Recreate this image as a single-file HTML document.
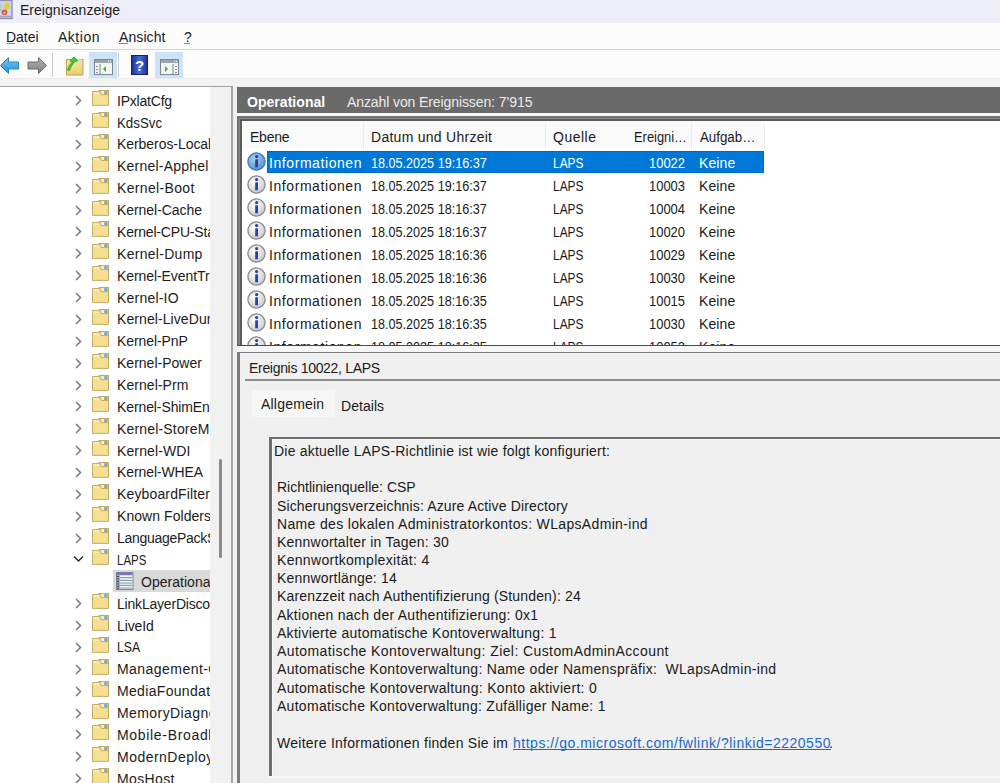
<!DOCTYPE html><html><head><meta charset="utf-8"><style>
*{margin:0;padding:0;box-sizing:border-box}
html,body{width:1000px;height:783px;overflow:hidden;background:#f0f0f0;font-family:"Liberation Sans",sans-serif;color:#1a1a1a}
div,svg{position:absolute}
.t{white-space:pre;font-size:14px;line-height:14px}
</style></head><body>
<div style="left:0px;top:0px;width:1000px;height:23px;background:#efeff9;"></div>
<svg style="left:0;top:0" width="14" height="20" viewBox="0 0 14 20">
<rect x="-2" y="0.5" width="14" height="18" fill="#d8d6ee" stroke="#8b91b0" stroke-width="1.4"/>
<rect x="0" y="2" width="11" height="13" fill="#d4d2ec"/>
<rect x="0" y="3" width="2" height="8" fill="#b8c8e0"/>
<path d="M4 4 Q6.5 0.8 9.5 3.5 Q10.8 6.5 8.5 9.5 L5 9.5 Q3 7 4 4 Z" fill="#cdd445"/>
<circle cx="4.5" cy="12.2" r="2.8" fill="#d65444"/>
<circle cx="4.4" cy="12.8" r="1.3" fill="#f2a8a0"/>
<rect x="0" y="15.6" width="11.5" height="1.8" fill="#a3a8c8"/>
</svg>
<div class="t" style="left:20px;top:3px;font-size:14px;line-height:14px;color:#1c1c1c;letter-spacing:0.027px;">Ereignisanzeige</div>
<div style="left:0px;top:23px;width:1000px;height:26px;background:#fcfcfd;"></div>
<div class="t" style="left:6px;top:30px;font-size:14px;line-height:14px;color:#1a1a1a;letter-spacing:-0.047px;">Datei</div>
<div style="left:7px;top:43px;width:8px;height:1px;background:#8a8a8a;"></div>
<div class="t" style="left:58px;top:30px;font-size:14px;line-height:14px;color:#1a1a1a;letter-spacing:0.516px;">Aktion</div>
<div style="left:74px;top:43px;width:5px;height:1px;background:#8a8a8a;"></div>
<div class="t" style="left:119px;top:30px;font-size:14px;line-height:14px;color:#1a1a1a;letter-spacing:0.096px;">Ansicht</div>
<div style="left:119px;top:43px;width:9px;height:1px;background:#8a8a8a;"></div>
<div class="t" style="left:184px;top:30px;font-size:14px;line-height:14px;color:#1a1a1a;">?</div>
<div style="left:184px;top:43px;width:6px;height:1px;background:#8a8a8a;"></div>
<div style="left:0px;top:49px;width:1000px;height:1px;background:#d5d5d7;"></div>
<div style="left:0px;top:50px;width:1000px;height:29px;background:#fcfcfc;"></div>
<div style="left:0px;top:79px;width:1000px;height:7px;background:#f3f3f3;"></div>
<div style="left:0px;top:78px;width:1000px;height:1px;background:#ececec;"></div>
<svg style="left:0;top:56px" width="20" height="19" viewBox="0 0 20 19">
<defs><linearGradient id="gb" x1="0" y1="0" x2="0" y2="1"><stop offset="0" stop-color="#7cc8f4"/><stop offset="1" stop-color="#1e8fd8"/></linearGradient></defs>
<path d="M0.5 9.5 L8.5 1.5 L8.5 6 L18.5 6 L18.5 13 L8.5 13 L8.5 17.5 Z" fill="url(#gb)" stroke="#2a86c8" stroke-width="1"/>
</svg>
<svg style="left:27px;top:56px" width="21" height="19" viewBox="0 0 21 19">
<defs><linearGradient id="gg" x1="0" y1="0" x2="0" y2="1"><stop offset="0" stop-color="#b8b8b8"/><stop offset="1" stop-color="#7a7a7a"/></linearGradient></defs>
<path d="M19.5 9.5 L11.5 1.5 L11.5 6 L1 6 L1 13 L11.5 13 L11.5 17.5 Z" fill="url(#gg)" stroke="#6c6c6c" stroke-width="1"/>
</svg>
<div style="left:52px;top:53px;width:1px;height:24px;background:#cfcfcf;"></div>
<svg style="left:65px;top:56px" width="20" height="20" viewBox="0 0 20 20">
<defs><linearGradient id="gf" x1="0" y1="0" x2="0" y2="1"><stop offset="0" stop-color="#f8e6a6"/><stop offset="1" stop-color="#edcc6e"/></linearGradient></defs>
<rect x="1.5" y="3.5" width="16.5" height="15.5" fill="url(#gf)" stroke="#c2a24a" stroke-width="1"/>
<rect x="12" y="3" width="4.5" height="2.5" fill="#c8d8f0"/>
<path d="M2.5 14 C3.5 10 5.5 7.5 7.5 6 L5 5 L9 0.8 L12.5 5 L10 5.5 C8 7.5 6 10 4.5 14.5 Z" fill="#3ccf2a" stroke="#1f9a18" stroke-width="0.7"/>
</svg>
<div style="left:89px;top:52px;width:28px;height:26px;background:#cce4f7;"></div>
<svg style="left:94px;top:59px" width="19" height="16" viewBox="0 0 19 16">
<rect x="0.5" y="0.5" width="18" height="15" fill="#f4f4f4" stroke="#7d8590" stroke-width="1"/>
<rect x="1" y="1" width="17" height="3" fill="#9aa2ac"/>
<rect x="14" y="1.5" width="1" height="1.5" fill="#e8e8e8"/><rect x="16" y="1.5" width="1" height="1.5" fill="#e8e8e8"/>
<rect x="5.5" y="5" width="1" height="10" fill="#7d8590"/>
<rect x="2" y="7" width="2" height="1" fill="#8a8a8a"/><rect x="2" y="10" width="2" height="1" fill="#8a8a8a"/><rect x="2" y="13" width="2" height="1" fill="#8a8a8a"/>
<path d="M9 10 L12 7 L12 13 Z" fill="#36b82a"/></svg>
<div style="left:118px;top:53px;width:1px;height:24px;background:#cfcfcf;"></div>
<svg style="left:131px;top:55px" width="17" height="20" viewBox="0 0 17 20">
<defs><linearGradient id="gh" x1="0" y1="0" x2="1" y2="0"><stop offset="0" stop-color="#1d2f9a"/><stop offset="0.5" stop-color="#4a6ad8"/><stop offset="1" stop-color="#1d2f9a"/></linearGradient></defs>
<rect x="0.5" y="0.5" width="16" height="19" fill="url(#gh)" stroke="#15206a" stroke-width="1"/>
<text x="8.5" y="15.5" font-family="Liberation Sans" font-weight="bold" font-size="15" fill="#fff" text-anchor="middle">?</text>
</svg>
<div style="left:155px;top:52px;width:28px;height:26px;background:#cce4f7;"></div>
<svg style="left:160px;top:59px" width="19" height="16" viewBox="0 0 19 16">
<rect x="0.5" y="0.5" width="18" height="15" fill="#f4f4f4" stroke="#7d8590" stroke-width="1"/>
<rect x="1" y="1" width="17" height="3" fill="#9aa2ac"/>
<rect x="14" y="1.5" width="1" height="1.5" fill="#e8e8e8"/><rect x="16" y="1.5" width="1" height="1.5" fill="#e8e8e8"/>
<rect x="12.5" y="5" width="1" height="10" fill="#7d8590"/>
<rect x="15" y="7" width="2" height="1" fill="#8a8a8a"/><rect x="15" y="10" width="2" height="1" fill="#8a8a8a"/><rect x="15" y="13" width="2" height="1" fill="#8a8a8a"/>
<path d="M5 7 L8 10 L5 13 Z" fill="#36b82a"/></svg>
<div style="left:0px;top:86px;width:232px;height:1px;background:#a3a3a3;"></div>
<div style="left:0px;top:87px;width:231px;height:696px;background:#ffffff;"></div>
<div style="left:210px;top:87px;width:21px;height:696px;background:#f1f1f1;"></div>
<div style="left:231px;top:86px;width:2px;height:697px;background:#a6a6a6;"></div>
<div style="left:219px;top:459px;width:3px;height:99px;background:#8a8a8a;border-radius:1.5px"></div>
<div style="left:0;top:87px;width:210px;height:696px;overflow:hidden">
<svg style="left:74px;top:8px" width="9" height="11" viewBox="0 0 9 11"><path d="M2 1 L6.5 5.5 L2 10" fill="none" stroke="#7a7a7a" stroke-width="1.5"/></svg>
<svg style="left:92px;top:3px" width="17" height="16" viewBox="0 0 17 16">
<rect x="7" y="0.5" width="9.5" height="14" fill="#e6cf82" stroke="#bba45a" stroke-width="0.9"/>
<rect x="9.3" y="1.2" width="3" height="2.8" fill="#f4f0e0"/><rect x="12.3" y="1.2" width="3" height="2.8" fill="#6fa9dc"/>
<path d="M0.5 1.5 L7.6 1.5 L9.4 4.6 L16.5 4.6 L16.5 15.4 L0.5 15.4 Z" fill="#f6df92" stroke="#bfa55a" stroke-width="0.9"/>
<rect x="1.3" y="2.3" width="6" height="1.5" fill="#fbeeb8"/>
</svg>
<div class="t" style="left:117px;top:7px;font-size:14px;line-height:14px;color:#1b1b1b;letter-spacing:-0.214px;">IPxlatCfg</div>
<svg style="left:74px;top:30px" width="9" height="11" viewBox="0 0 9 11"><path d="M2 1 L6.5 5.5 L2 10" fill="none" stroke="#7a7a7a" stroke-width="1.5"/></svg>
<svg style="left:92px;top:25px" width="17" height="16" viewBox="0 0 17 16">
<rect x="7" y="0.5" width="9.5" height="14" fill="#e6cf82" stroke="#bba45a" stroke-width="0.9"/>
<rect x="9.3" y="1.2" width="3" height="2.8" fill="#f4f0e0"/><rect x="12.3" y="1.2" width="3" height="2.8" fill="#6fa9dc"/>
<path d="M0.5 1.5 L7.6 1.5 L9.4 4.6 L16.5 4.6 L16.5 15.4 L0.5 15.4 Z" fill="#f6df92" stroke="#bfa55a" stroke-width="0.9"/>
<rect x="1.3" y="2.3" width="6" height="1.5" fill="#fbeeb8"/>
</svg>
<div class="t" style="left:117px;top:29px;font-size:14px;line-height:14px;color:#1b1b1b;transform:scaleX(0.9485);transform-origin:0 0;">KdsSvc</div>
<svg style="left:74px;top:52px" width="9" height="11" viewBox="0 0 9 11"><path d="M2 1 L6.5 5.5 L2 10" fill="none" stroke="#7a7a7a" stroke-width="1.5"/></svg>
<svg style="left:92px;top:47px" width="17" height="16" viewBox="0 0 17 16">
<rect x="7" y="0.5" width="9.5" height="14" fill="#e6cf82" stroke="#bba45a" stroke-width="0.9"/>
<rect x="9.3" y="1.2" width="3" height="2.8" fill="#f4f0e0"/><rect x="12.3" y="1.2" width="3" height="2.8" fill="#6fa9dc"/>
<path d="M0.5 1.5 L7.6 1.5 L9.4 4.6 L16.5 4.6 L16.5 15.4 L0.5 15.4 Z" fill="#f6df92" stroke="#bfa55a" stroke-width="0.9"/>
<rect x="1.3" y="2.3" width="6" height="1.5" fill="#fbeeb8"/>
</svg>
<div class="t" style="left:117px;top:50px;font-size:14px;line-height:14px;color:#1b1b1b;letter-spacing:-0.057px;">Kerberos-Local</div>
<svg style="left:74px;top:74px" width="9" height="11" viewBox="0 0 9 11"><path d="M2 1 L6.5 5.5 L2 10" fill="none" stroke="#7a7a7a" stroke-width="1.5"/></svg>
<svg style="left:92px;top:69px" width="17" height="16" viewBox="0 0 17 16">
<rect x="7" y="0.5" width="9.5" height="14" fill="#e6cf82" stroke="#bba45a" stroke-width="0.9"/>
<rect x="9.3" y="1.2" width="3" height="2.8" fill="#f4f0e0"/><rect x="12.3" y="1.2" width="3" height="2.8" fill="#6fa9dc"/>
<path d="M0.5 1.5 L7.6 1.5 L9.4 4.6 L16.5 4.6 L16.5 15.4 L0.5 15.4 Z" fill="#f6df92" stroke="#bfa55a" stroke-width="0.9"/>
<rect x="1.3" y="2.3" width="6" height="1.5" fill="#fbeeb8"/>
</svg>
<div class="t" style="left:117px;top:72px;font-size:14px;line-height:14px;color:#1b1b1b;letter-spacing:0.230px;">Kernel-Apphel</div>
<svg style="left:74px;top:96px" width="9" height="11" viewBox="0 0 9 11"><path d="M2 1 L6.5 5.5 L2 10" fill="none" stroke="#7a7a7a" stroke-width="1.5"/></svg>
<svg style="left:92px;top:91px" width="17" height="16" viewBox="0 0 17 16">
<rect x="7" y="0.5" width="9.5" height="14" fill="#e6cf82" stroke="#bba45a" stroke-width="0.9"/>
<rect x="9.3" y="1.2" width="3" height="2.8" fill="#f4f0e0"/><rect x="12.3" y="1.2" width="3" height="2.8" fill="#6fa9dc"/>
<path d="M0.5 1.5 L7.6 1.5 L9.4 4.6 L16.5 4.6 L16.5 15.4 L0.5 15.4 Z" fill="#f6df92" stroke="#bfa55a" stroke-width="0.9"/>
<rect x="1.3" y="2.3" width="6" height="1.5" fill="#fbeeb8"/>
</svg>
<div class="t" style="left:117px;top:94px;font-size:14px;line-height:14px;color:#1b1b1b;letter-spacing:0.346px;">Kernel-Boot</div>
<svg style="left:74px;top:118px" width="9" height="11" viewBox="0 0 9 11"><path d="M2 1 L6.5 5.5 L2 10" fill="none" stroke="#7a7a7a" stroke-width="1.5"/></svg>
<svg style="left:92px;top:113px" width="17" height="16" viewBox="0 0 17 16">
<rect x="7" y="0.5" width="9.5" height="14" fill="#e6cf82" stroke="#bba45a" stroke-width="0.9"/>
<rect x="9.3" y="1.2" width="3" height="2.8" fill="#f4f0e0"/><rect x="12.3" y="1.2" width="3" height="2.8" fill="#6fa9dc"/>
<path d="M0.5 1.5 L7.6 1.5 L9.4 4.6 L16.5 4.6 L16.5 15.4 L0.5 15.4 Z" fill="#f6df92" stroke="#bfa55a" stroke-width="0.9"/>
<rect x="1.3" y="2.3" width="6" height="1.5" fill="#fbeeb8"/>
</svg>
<div class="t" style="left:117px;top:116px;font-size:14px;line-height:14px;color:#1b1b1b;letter-spacing:-0.055px;">Kernel-Cache</div>
<svg style="left:74px;top:139px" width="9" height="11" viewBox="0 0 9 11"><path d="M2 1 L6.5 5.5 L2 10" fill="none" stroke="#7a7a7a" stroke-width="1.5"/></svg>
<svg style="left:92px;top:134px" width="17" height="16" viewBox="0 0 17 16">
<rect x="7" y="0.5" width="9.5" height="14" fill="#e6cf82" stroke="#bba45a" stroke-width="0.9"/>
<rect x="9.3" y="1.2" width="3" height="2.8" fill="#f4f0e0"/><rect x="12.3" y="1.2" width="3" height="2.8" fill="#6fa9dc"/>
<path d="M0.5 1.5 L7.6 1.5 L9.4 4.6 L16.5 4.6 L16.5 15.4 L0.5 15.4 Z" fill="#f6df92" stroke="#bfa55a" stroke-width="0.9"/>
<rect x="1.3" y="2.3" width="6" height="1.5" fill="#fbeeb8"/>
</svg>
<div class="t" style="left:117px;top:138px;font-size:14px;line-height:14px;color:#1b1b1b;letter-spacing:-0.183px;">Kernel-CPU-Starter</div>
<svg style="left:74px;top:161px" width="9" height="11" viewBox="0 0 9 11"><path d="M2 1 L6.5 5.5 L2 10" fill="none" stroke="#7a7a7a" stroke-width="1.5"/></svg>
<svg style="left:92px;top:156px" width="17" height="16" viewBox="0 0 17 16">
<rect x="7" y="0.5" width="9.5" height="14" fill="#e6cf82" stroke="#bba45a" stroke-width="0.9"/>
<rect x="9.3" y="1.2" width="3" height="2.8" fill="#f4f0e0"/><rect x="12.3" y="1.2" width="3" height="2.8" fill="#6fa9dc"/>
<path d="M0.5 1.5 L7.6 1.5 L9.4 4.6 L16.5 4.6 L16.5 15.4 L0.5 15.4 Z" fill="#f6df92" stroke="#bfa55a" stroke-width="0.9"/>
<rect x="1.3" y="2.3" width="6" height="1.5" fill="#fbeeb8"/>
</svg>
<div class="t" style="left:117px;top:160px;font-size:14px;line-height:14px;color:#1b1b1b;letter-spacing:0.292px;">Kernel-Dump</div>
<svg style="left:74px;top:183px" width="9" height="11" viewBox="0 0 9 11"><path d="M2 1 L6.5 5.5 L2 10" fill="none" stroke="#7a7a7a" stroke-width="1.5"/></svg>
<svg style="left:92px;top:178px" width="17" height="16" viewBox="0 0 17 16">
<rect x="7" y="0.5" width="9.5" height="14" fill="#e6cf82" stroke="#bba45a" stroke-width="0.9"/>
<rect x="9.3" y="1.2" width="3" height="2.8" fill="#f4f0e0"/><rect x="12.3" y="1.2" width="3" height="2.8" fill="#6fa9dc"/>
<path d="M0.5 1.5 L7.6 1.5 L9.4 4.6 L16.5 4.6 L16.5 15.4 L0.5 15.4 Z" fill="#f6df92" stroke="#bfa55a" stroke-width="0.9"/>
<rect x="1.3" y="2.3" width="6" height="1.5" fill="#fbeeb8"/>
</svg>
<div class="t" style="left:117px;top:182px;font-size:14px;line-height:14px;color:#1b1b1b;letter-spacing:-0.079px;">Kernel-EventTracing</div>
<svg style="left:74px;top:205px" width="9" height="11" viewBox="0 0 9 11"><path d="M2 1 L6.5 5.5 L2 10" fill="none" stroke="#7a7a7a" stroke-width="1.5"/></svg>
<svg style="left:92px;top:200px" width="17" height="16" viewBox="0 0 17 16">
<rect x="7" y="0.5" width="9.5" height="14" fill="#e6cf82" stroke="#bba45a" stroke-width="0.9"/>
<rect x="9.3" y="1.2" width="3" height="2.8" fill="#f4f0e0"/><rect x="12.3" y="1.2" width="3" height="2.8" fill="#6fa9dc"/>
<path d="M0.5 1.5 L7.6 1.5 L9.4 4.6 L16.5 4.6 L16.5 15.4 L0.5 15.4 Z" fill="#f6df92" stroke="#bfa55a" stroke-width="0.9"/>
<rect x="1.3" y="2.3" width="6" height="1.5" fill="#fbeeb8"/>
</svg>
<div class="t" style="left:117px;top:204px;font-size:14px;line-height:14px;color:#1b1b1b;letter-spacing:0.210px;">Kernel-IO</div>
<svg style="left:74px;top:227px" width="9" height="11" viewBox="0 0 9 11"><path d="M2 1 L6.5 5.5 L2 10" fill="none" stroke="#7a7a7a" stroke-width="1.5"/></svg>
<svg style="left:92px;top:222px" width="17" height="16" viewBox="0 0 17 16">
<rect x="7" y="0.5" width="9.5" height="14" fill="#e6cf82" stroke="#bba45a" stroke-width="0.9"/>
<rect x="9.3" y="1.2" width="3" height="2.8" fill="#f4f0e0"/><rect x="12.3" y="1.2" width="3" height="2.8" fill="#6fa9dc"/>
<path d="M0.5 1.5 L7.6 1.5 L9.4 4.6 L16.5 4.6 L16.5 15.4 L0.5 15.4 Z" fill="#f6df92" stroke="#bfa55a" stroke-width="0.9"/>
<rect x="1.3" y="2.3" width="6" height="1.5" fill="#fbeeb8"/>
</svg>
<div class="t" style="left:117px;top:225px;font-size:14px;line-height:14px;color:#1b1b1b;letter-spacing:0.082px;">Kernel-LiveDump</div>
<svg style="left:74px;top:249px" width="9" height="11" viewBox="0 0 9 11"><path d="M2 1 L6.5 5.5 L2 10" fill="none" stroke="#7a7a7a" stroke-width="1.5"/></svg>
<svg style="left:92px;top:244px" width="17" height="16" viewBox="0 0 17 16">
<rect x="7" y="0.5" width="9.5" height="14" fill="#e6cf82" stroke="#bba45a" stroke-width="0.9"/>
<rect x="9.3" y="1.2" width="3" height="2.8" fill="#f4f0e0"/><rect x="12.3" y="1.2" width="3" height="2.8" fill="#6fa9dc"/>
<path d="M0.5 1.5 L7.6 1.5 L9.4 4.6 L16.5 4.6 L16.5 15.4 L0.5 15.4 Z" fill="#f6df92" stroke="#bfa55a" stroke-width="0.9"/>
<rect x="1.3" y="2.3" width="6" height="1.5" fill="#fbeeb8"/>
</svg>
<div class="t" style="left:117px;top:247px;font-size:14px;line-height:14px;color:#1b1b1b;letter-spacing:-0.077px;">Kernel-PnP</div>
<svg style="left:74px;top:271px" width="9" height="11" viewBox="0 0 9 11"><path d="M2 1 L6.5 5.5 L2 10" fill="none" stroke="#7a7a7a" stroke-width="1.5"/></svg>
<svg style="left:92px;top:266px" width="17" height="16" viewBox="0 0 17 16">
<rect x="7" y="0.5" width="9.5" height="14" fill="#e6cf82" stroke="#bba45a" stroke-width="0.9"/>
<rect x="9.3" y="1.2" width="3" height="2.8" fill="#f4f0e0"/><rect x="12.3" y="1.2" width="3" height="2.8" fill="#6fa9dc"/>
<path d="M0.5 1.5 L7.6 1.5 L9.4 4.6 L16.5 4.6 L16.5 15.4 L0.5 15.4 Z" fill="#f6df92" stroke="#bfa55a" stroke-width="0.9"/>
<rect x="1.3" y="2.3" width="6" height="1.5" fill="#fbeeb8"/>
</svg>
<div class="t" style="left:117px;top:269px;font-size:14px;line-height:14px;color:#1b1b1b;letter-spacing:0.007px;">Kernel-Power</div>
<svg style="left:74px;top:293px" width="9" height="11" viewBox="0 0 9 11"><path d="M2 1 L6.5 5.5 L2 10" fill="none" stroke="#7a7a7a" stroke-width="1.5"/></svg>
<svg style="left:92px;top:288px" width="17" height="16" viewBox="0 0 17 16">
<rect x="7" y="0.5" width="9.5" height="14" fill="#e6cf82" stroke="#bba45a" stroke-width="0.9"/>
<rect x="9.3" y="1.2" width="3" height="2.8" fill="#f4f0e0"/><rect x="12.3" y="1.2" width="3" height="2.8" fill="#6fa9dc"/>
<path d="M0.5 1.5 L7.6 1.5 L9.4 4.6 L16.5 4.6 L16.5 15.4 L0.5 15.4 Z" fill="#f6df92" stroke="#bfa55a" stroke-width="0.9"/>
<rect x="1.3" y="2.3" width="6" height="1.5" fill="#fbeeb8"/>
</svg>
<div class="t" style="left:117px;top:291px;font-size:14px;line-height:14px;color:#1b1b1b;letter-spacing:0.056px;">Kernel-Prm</div>
<svg style="left:74px;top:314px" width="9" height="11" viewBox="0 0 9 11"><path d="M2 1 L6.5 5.5 L2 10" fill="none" stroke="#7a7a7a" stroke-width="1.5"/></svg>
<svg style="left:92px;top:309px" width="17" height="16" viewBox="0 0 17 16">
<rect x="7" y="0.5" width="9.5" height="14" fill="#e6cf82" stroke="#bba45a" stroke-width="0.9"/>
<rect x="9.3" y="1.2" width="3" height="2.8" fill="#f4f0e0"/><rect x="12.3" y="1.2" width="3" height="2.8" fill="#6fa9dc"/>
<path d="M0.5 1.5 L7.6 1.5 L9.4 4.6 L16.5 4.6 L16.5 15.4 L0.5 15.4 Z" fill="#f6df92" stroke="#bfa55a" stroke-width="0.9"/>
<rect x="1.3" y="2.3" width="6" height="1.5" fill="#fbeeb8"/>
</svg>
<div class="t" style="left:117px;top:313px;font-size:14px;line-height:14px;color:#1b1b1b;letter-spacing:-0.105px;">Kernel-ShimEngine</div>
<svg style="left:74px;top:336px" width="9" height="11" viewBox="0 0 9 11"><path d="M2 1 L6.5 5.5 L2 10" fill="none" stroke="#7a7a7a" stroke-width="1.5"/></svg>
<svg style="left:92px;top:331px" width="17" height="16" viewBox="0 0 17 16">
<rect x="7" y="0.5" width="9.5" height="14" fill="#e6cf82" stroke="#bba45a" stroke-width="0.9"/>
<rect x="9.3" y="1.2" width="3" height="2.8" fill="#f4f0e0"/><rect x="12.3" y="1.2" width="3" height="2.8" fill="#6fa9dc"/>
<path d="M0.5 1.5 L7.6 1.5 L9.4 4.6 L16.5 4.6 L16.5 15.4 L0.5 15.4 Z" fill="#f6df92" stroke="#bfa55a" stroke-width="0.9"/>
<rect x="1.3" y="2.3" width="6" height="1.5" fill="#fbeeb8"/>
</svg>
<div class="t" style="left:117px;top:335px;font-size:14px;line-height:14px;color:#1b1b1b;letter-spacing:0.170px;">Kernel-StoreMgr</div>
<svg style="left:74px;top:358px" width="9" height="11" viewBox="0 0 9 11"><path d="M2 1 L6.5 5.5 L2 10" fill="none" stroke="#7a7a7a" stroke-width="1.5"/></svg>
<svg style="left:92px;top:353px" width="17" height="16" viewBox="0 0 17 16">
<rect x="7" y="0.5" width="9.5" height="14" fill="#e6cf82" stroke="#bba45a" stroke-width="0.9"/>
<rect x="9.3" y="1.2" width="3" height="2.8" fill="#f4f0e0"/><rect x="12.3" y="1.2" width="3" height="2.8" fill="#6fa9dc"/>
<path d="M0.5 1.5 L7.6 1.5 L9.4 4.6 L16.5 4.6 L16.5 15.4 L0.5 15.4 Z" fill="#f6df92" stroke="#bfa55a" stroke-width="0.9"/>
<rect x="1.3" y="2.3" width="6" height="1.5" fill="#fbeeb8"/>
</svg>
<div class="t" style="left:117px;top:357px;font-size:14px;line-height:14px;color:#1b1b1b;letter-spacing:0.116px;">Kernel-WDI</div>
<svg style="left:74px;top:380px" width="9" height="11" viewBox="0 0 9 11"><path d="M2 1 L6.5 5.5 L2 10" fill="none" stroke="#7a7a7a" stroke-width="1.5"/></svg>
<svg style="left:92px;top:375px" width="17" height="16" viewBox="0 0 17 16">
<rect x="7" y="0.5" width="9.5" height="14" fill="#e6cf82" stroke="#bba45a" stroke-width="0.9"/>
<rect x="9.3" y="1.2" width="3" height="2.8" fill="#f4f0e0"/><rect x="12.3" y="1.2" width="3" height="2.8" fill="#6fa9dc"/>
<path d="M0.5 1.5 L7.6 1.5 L9.4 4.6 L16.5 4.6 L16.5 15.4 L0.5 15.4 Z" fill="#f6df92" stroke="#bfa55a" stroke-width="0.9"/>
<rect x="1.3" y="2.3" width="6" height="1.5" fill="#fbeeb8"/>
</svg>
<div class="t" style="left:117px;top:378px;font-size:14px;line-height:14px;color:#1b1b1b;letter-spacing:-0.094px;">Kernel-WHEA</div>
<svg style="left:74px;top:402px" width="9" height="11" viewBox="0 0 9 11"><path d="M2 1 L6.5 5.5 L2 10" fill="none" stroke="#7a7a7a" stroke-width="1.5"/></svg>
<svg style="left:92px;top:397px" width="17" height="16" viewBox="0 0 17 16">
<rect x="7" y="0.5" width="9.5" height="14" fill="#e6cf82" stroke="#bba45a" stroke-width="0.9"/>
<rect x="9.3" y="1.2" width="3" height="2.8" fill="#f4f0e0"/><rect x="12.3" y="1.2" width="3" height="2.8" fill="#6fa9dc"/>
<path d="M0.5 1.5 L7.6 1.5 L9.4 4.6 L16.5 4.6 L16.5 15.4 L0.5 15.4 Z" fill="#f6df92" stroke="#bfa55a" stroke-width="0.9"/>
<rect x="1.3" y="2.3" width="6" height="1.5" fill="#fbeeb8"/>
</svg>
<div class="t" style="left:117px;top:400px;font-size:14px;line-height:14px;color:#1b1b1b;letter-spacing:0.143px;">KeyboardFilter</div>
<svg style="left:74px;top:424px" width="9" height="11" viewBox="0 0 9 11"><path d="M2 1 L6.5 5.5 L2 10" fill="none" stroke="#7a7a7a" stroke-width="1.5"/></svg>
<svg style="left:92px;top:419px" width="17" height="16" viewBox="0 0 17 16">
<rect x="7" y="0.5" width="9.5" height="14" fill="#e6cf82" stroke="#bba45a" stroke-width="0.9"/>
<rect x="9.3" y="1.2" width="3" height="2.8" fill="#f4f0e0"/><rect x="12.3" y="1.2" width="3" height="2.8" fill="#6fa9dc"/>
<path d="M0.5 1.5 L7.6 1.5 L9.4 4.6 L16.5 4.6 L16.5 15.4 L0.5 15.4 Z" fill="#f6df92" stroke="#bfa55a" stroke-width="0.9"/>
<rect x="1.3" y="2.3" width="6" height="1.5" fill="#fbeeb8"/>
</svg>
<div class="t" style="left:117px;top:422px;font-size:14px;line-height:14px;color:#1b1b1b;letter-spacing:0.055px;">Known Folders</div>
<svg style="left:74px;top:446px" width="9" height="11" viewBox="0 0 9 11"><path d="M2 1 L6.5 5.5 L2 10" fill="none" stroke="#7a7a7a" stroke-width="1.5"/></svg>
<svg style="left:92px;top:441px" width="17" height="16" viewBox="0 0 17 16">
<rect x="7" y="0.5" width="9.5" height="14" fill="#e6cf82" stroke="#bba45a" stroke-width="0.9"/>
<rect x="9.3" y="1.2" width="3" height="2.8" fill="#f4f0e0"/><rect x="12.3" y="1.2" width="3" height="2.8" fill="#6fa9dc"/>
<path d="M0.5 1.5 L7.6 1.5 L9.4 4.6 L16.5 4.6 L16.5 15.4 L0.5 15.4 Z" fill="#f6df92" stroke="#bfa55a" stroke-width="0.9"/>
<rect x="1.3" y="2.3" width="6" height="1.5" fill="#fbeeb8"/>
</svg>
<div class="t" style="left:117px;top:444px;font-size:14px;line-height:14px;color:#1b1b1b;letter-spacing:-0.284px;">LanguagePackSetup</div>
<svg style="left:73px;top:468px" width="11" height="8" viewBox="0 0 11 8"><path d="M1 1.5 L5.5 6 L10 1.5" fill="none" stroke="#2a2a2a" stroke-width="1.5"/></svg>
<svg style="left:92px;top:462px" width="17" height="16" viewBox="0 0 17 16">
<rect x="7" y="0.5" width="9.5" height="14" fill="#e6cf82" stroke="#bba45a" stroke-width="0.9"/>
<rect x="9.3" y="1.2" width="3" height="2.8" fill="#f4f0e0"/><rect x="12.3" y="1.2" width="3" height="2.8" fill="#6fa9dc"/>
<path d="M0.5 1.5 L7.6 1.5 L9.4 4.6 L16.5 4.6 L16.5 15.4 L0.5 15.4 Z" fill="#f6df92" stroke="#bfa55a" stroke-width="0.9"/>
<rect x="1.3" y="2.3" width="6" height="1.5" fill="#fbeeb8"/>
</svg>
<div class="t" style="left:117px;top:466px;font-size:14px;line-height:14px;color:#1b1b1b;transform:scaleX(0.8219);transform-origin:0 0;">LAPS</div>
<div style="left:113px;top:483px;width:120px;height:22px;background:#d9d9d9"></div>
<svg style="left:116px;top:485px" width="18" height="18" viewBox="0 0 18 18">
<rect x="0.5" y="0.5" width="16.5" height="17" fill="#f2f8fa" stroke="#7c8290" stroke-width="1"/>
<rect x="1" y="1" width="15.5" height="2.2" fill="#7c74c8"/>
<g fill="#d2eaf0"><rect x="4" y="6" width="12.5" height="2"/><rect x="4" y="11" width="12.5" height="2"/></g>
<g fill="#8e98a6"><rect x="4" y="5" width="12.5" height="1"/><rect x="4" y="8" width="12.5" height="1"/><rect x="4" y="10.5" width="12.5" height="1"/><rect x="4" y="13" width="12.5" height="1"/><rect x="4" y="15.5" width="12.5" height="1"/></g>
<rect x="1" y="3.2" width="2.8" height="14" fill="#9a9ea8"/>
<g fill="#4a4e58"><rect x="1" y="4" width="2" height="1"/><rect x="1" y="6.5" width="2" height="1"/><rect x="1" y="9" width="2" height="1"/><rect x="1" y="11.5" width="2" height="1"/><rect x="1" y="14" width="2" height="1"/><rect x="1" y="16.3" width="2" height="1"/></g>
</svg>
<div class="t" style="left:141px;top:488px;font-size:14px;line-height:14px;color:#1b1b1b;letter-spacing:0.024px;">Operational</div>
<svg style="left:74px;top:511px" width="9" height="11" viewBox="0 0 9 11"><path d="M2 1 L6.5 5.5 L2 10" fill="none" stroke="#7a7a7a" stroke-width="1.5"/></svg>
<svg style="left:92px;top:506px" width="17" height="16" viewBox="0 0 17 16">
<rect x="7" y="0.5" width="9.5" height="14" fill="#e6cf82" stroke="#bba45a" stroke-width="0.9"/>
<rect x="9.3" y="1.2" width="3" height="2.8" fill="#f4f0e0"/><rect x="12.3" y="1.2" width="3" height="2.8" fill="#6fa9dc"/>
<path d="M0.5 1.5 L7.6 1.5 L9.4 4.6 L16.5 4.6 L16.5 15.4 L0.5 15.4 Z" fill="#f6df92" stroke="#bfa55a" stroke-width="0.9"/>
<rect x="1.3" y="2.3" width="6" height="1.5" fill="#fbeeb8"/>
</svg>
<div class="t" style="left:117px;top:510px;font-size:14px;line-height:14px;color:#1b1b1b;letter-spacing:-0.201px;">LinkLayerDiscovery</div>
<svg style="left:74px;top:533px" width="9" height="11" viewBox="0 0 9 11"><path d="M2 1 L6.5 5.5 L2 10" fill="none" stroke="#7a7a7a" stroke-width="1.5"/></svg>
<svg style="left:92px;top:528px" width="17" height="16" viewBox="0 0 17 16">
<rect x="7" y="0.5" width="9.5" height="14" fill="#e6cf82" stroke="#bba45a" stroke-width="0.9"/>
<rect x="9.3" y="1.2" width="3" height="2.8" fill="#f4f0e0"/><rect x="12.3" y="1.2" width="3" height="2.8" fill="#6fa9dc"/>
<path d="M0.5 1.5 L7.6 1.5 L9.4 4.6 L16.5 4.6 L16.5 15.4 L0.5 15.4 Z" fill="#f6df92" stroke="#bfa55a" stroke-width="0.9"/>
<rect x="1.3" y="2.3" width="6" height="1.5" fill="#fbeeb8"/>
</svg>
<div class="t" style="left:117px;top:532px;font-size:14px;line-height:14px;color:#1b1b1b;letter-spacing:-0.132px;">LiveId</div>
<svg style="left:74px;top:555px" width="9" height="11" viewBox="0 0 9 11"><path d="M2 1 L6.5 5.5 L2 10" fill="none" stroke="#7a7a7a" stroke-width="1.5"/></svg>
<svg style="left:92px;top:550px" width="17" height="16" viewBox="0 0 17 16">
<rect x="7" y="0.5" width="9.5" height="14" fill="#e6cf82" stroke="#bba45a" stroke-width="0.9"/>
<rect x="9.3" y="1.2" width="3" height="2.8" fill="#f4f0e0"/><rect x="12.3" y="1.2" width="3" height="2.8" fill="#6fa9dc"/>
<path d="M0.5 1.5 L7.6 1.5 L9.4 4.6 L16.5 4.6 L16.5 15.4 L0.5 15.4 Z" fill="#f6df92" stroke="#bfa55a" stroke-width="0.9"/>
<rect x="1.3" y="2.3" width="6" height="1.5" fill="#fbeeb8"/>
</svg>
<div class="t" style="left:117px;top:553px;font-size:14px;line-height:14px;color:#1b1b1b;transform:scaleX(0.8731);transform-origin:0 0;">LSA</div>
<svg style="left:74px;top:577px" width="9" height="11" viewBox="0 0 9 11"><path d="M2 1 L6.5 5.5 L2 10" fill="none" stroke="#7a7a7a" stroke-width="1.5"/></svg>
<svg style="left:92px;top:572px" width="17" height="16" viewBox="0 0 17 16">
<rect x="7" y="0.5" width="9.5" height="14" fill="#e6cf82" stroke="#bba45a" stroke-width="0.9"/>
<rect x="9.3" y="1.2" width="3" height="2.8" fill="#f4f0e0"/><rect x="12.3" y="1.2" width="3" height="2.8" fill="#6fa9dc"/>
<path d="M0.5 1.5 L7.6 1.5 L9.4 4.6 L16.5 4.6 L16.5 15.4 L0.5 15.4 Z" fill="#f6df92" stroke="#bfa55a" stroke-width="0.9"/>
<rect x="1.3" y="2.3" width="6" height="1.5" fill="#fbeeb8"/>
</svg>
<div class="t" style="left:117px;top:575px;font-size:14px;line-height:14px;color:#1b1b1b;letter-spacing:0.451px;">Management-Odata</div>
<svg style="left:74px;top:599px" width="9" height="11" viewBox="0 0 9 11"><path d="M2 1 L6.5 5.5 L2 10" fill="none" stroke="#7a7a7a" stroke-width="1.5"/></svg>
<svg style="left:92px;top:594px" width="17" height="16" viewBox="0 0 17 16">
<rect x="7" y="0.5" width="9.5" height="14" fill="#e6cf82" stroke="#bba45a" stroke-width="0.9"/>
<rect x="9.3" y="1.2" width="3" height="2.8" fill="#f4f0e0"/><rect x="12.3" y="1.2" width="3" height="2.8" fill="#6fa9dc"/>
<path d="M0.5 1.5 L7.6 1.5 L9.4 4.6 L16.5 4.6 L16.5 15.4 L0.5 15.4 Z" fill="#f6df92" stroke="#bfa55a" stroke-width="0.9"/>
<rect x="1.3" y="2.3" width="6" height="1.5" fill="#fbeeb8"/>
</svg>
<div class="t" style="left:117px;top:597px;font-size:14px;line-height:14px;color:#1b1b1b;letter-spacing:0.326px;">MediaFoundation</div>
<svg style="left:74px;top:621px" width="9" height="11" viewBox="0 0 9 11"><path d="M2 1 L6.5 5.5 L2 10" fill="none" stroke="#7a7a7a" stroke-width="1.5"/></svg>
<svg style="left:92px;top:616px" width="17" height="16" viewBox="0 0 17 16">
<rect x="7" y="0.5" width="9.5" height="14" fill="#e6cf82" stroke="#bba45a" stroke-width="0.9"/>
<rect x="9.3" y="1.2" width="3" height="2.8" fill="#f4f0e0"/><rect x="12.3" y="1.2" width="3" height="2.8" fill="#6fa9dc"/>
<path d="M0.5 1.5 L7.6 1.5 L9.4 4.6 L16.5 4.6 L16.5 15.4 L0.5 15.4 Z" fill="#f6df92" stroke="#bfa55a" stroke-width="0.9"/>
<rect x="1.3" y="2.3" width="6" height="1.5" fill="#fbeeb8"/>
</svg>
<div class="t" style="left:117px;top:619px;font-size:14px;line-height:14px;color:#1b1b1b;letter-spacing:0.416px;">MemoryDiagnostics</div>
<svg style="left:74px;top:642px" width="9" height="11" viewBox="0 0 9 11"><path d="M2 1 L6.5 5.5 L2 10" fill="none" stroke="#7a7a7a" stroke-width="1.5"/></svg>
<svg style="left:92px;top:637px" width="17" height="16" viewBox="0 0 17 16">
<rect x="7" y="0.5" width="9.5" height="14" fill="#e6cf82" stroke="#bba45a" stroke-width="0.9"/>
<rect x="9.3" y="1.2" width="3" height="2.8" fill="#f4f0e0"/><rect x="12.3" y="1.2" width="3" height="2.8" fill="#6fa9dc"/>
<path d="M0.5 1.5 L7.6 1.5 L9.4 4.6 L16.5 4.6 L16.5 15.4 L0.5 15.4 Z" fill="#f6df92" stroke="#bfa55a" stroke-width="0.9"/>
<rect x="1.3" y="2.3" width="6" height="1.5" fill="#fbeeb8"/>
</svg>
<div class="t" style="left:117px;top:641px;font-size:14px;line-height:14px;color:#1b1b1b;letter-spacing:0.676px;">Mobile-Broadband</div>
<svg style="left:74px;top:664px" width="9" height="11" viewBox="0 0 9 11"><path d="M2 1 L6.5 5.5 L2 10" fill="none" stroke="#7a7a7a" stroke-width="1.5"/></svg>
<svg style="left:92px;top:659px" width="17" height="16" viewBox="0 0 17 16">
<rect x="7" y="0.5" width="9.5" height="14" fill="#e6cf82" stroke="#bba45a" stroke-width="0.9"/>
<rect x="9.3" y="1.2" width="3" height="2.8" fill="#f4f0e0"/><rect x="12.3" y="1.2" width="3" height="2.8" fill="#6fa9dc"/>
<path d="M0.5 1.5 L7.6 1.5 L9.4 4.6 L16.5 4.6 L16.5 15.4 L0.5 15.4 Z" fill="#f6df92" stroke="#bfa55a" stroke-width="0.9"/>
<rect x="1.3" y="2.3" width="6" height="1.5" fill="#fbeeb8"/>
</svg>
<div class="t" style="left:117px;top:663px;font-size:14px;line-height:14px;color:#1b1b1b;letter-spacing:0.474px;">ModernDeployment</div>
<svg style="left:74px;top:686px" width="9" height="11" viewBox="0 0 9 11"><path d="M2 1 L6.5 5.5 L2 10" fill="none" stroke="#7a7a7a" stroke-width="1.5"/></svg>
<svg style="left:92px;top:681px" width="17" height="16" viewBox="0 0 17 16">
<rect x="7" y="0.5" width="9.5" height="14" fill="#e6cf82" stroke="#bba45a" stroke-width="0.9"/>
<rect x="9.3" y="1.2" width="3" height="2.8" fill="#f4f0e0"/><rect x="12.3" y="1.2" width="3" height="2.8" fill="#6fa9dc"/>
<path d="M0.5 1.5 L7.6 1.5 L9.4 4.6 L16.5 4.6 L16.5 15.4 L0.5 15.4 Z" fill="#f6df92" stroke="#bfa55a" stroke-width="0.9"/>
<rect x="1.3" y="2.3" width="6" height="1.5" fill="#fbeeb8"/>
</svg>
<div class="t" style="left:117px;top:685px;font-size:14px;line-height:14px;color:#1b1b1b;letter-spacing:0.361px;">MosHost</div>
</div>
<div style="left:237px;top:87px;width:763px;height:27px;background:#6a6a6a;"></div>
<div class="t" style="left:247px;top:95px;font-size:14px;line-height:14px;color:#ffffff;font-weight:bold;letter-spacing:0.040px;">Operational</div>
<div class="t" style="left:347px;top:95px;font-size:14px;line-height:14px;color:#ececec;letter-spacing:-0.102px;">Anzahl von Ereignissen: 7’915</div>
<div style="left:237px;top:113px;width:763px;height:3px;background:#f6f6f6;"></div>
<div style="left:237px;top:116px;width:763px;height:229px;background:#707070;"></div>
<div style="left:239px;top:118px;width:761px;height:227px;background:#8a8a8a;"></div>
<div style="left:240px;top:119px;width:760px;height:226px;background:#5c5c5c;"></div>
<div style="left:242px;top:121px;width:758px;height:224px;background:#ffffff;"></div>
<div style="left:242px;top:121px;width:522px;height:27px;background:#fafafa;"></div>
<div style="left:363px;top:123px;width:1px;height:25px;background:#ececec;"></div>
<div style="left:545px;top:123px;width:1px;height:25px;background:#ececec;"></div>
<div style="left:691px;top:123px;width:1px;height:25px;background:#ececec;"></div>
<div style="left:764px;top:123px;width:1px;height:25px;background:#ececec;"></div>
<div class="t" style="left:250px;top:130px;font-size:14px;line-height:14px;color:#1a1a1a;letter-spacing:-0.246px;">Ebene</div>
<div class="t" style="left:371px;top:130px;font-size:14px;line-height:14px;color:#1a1a1a;letter-spacing:0.268px;">Datum und Uhrzeit</div>
<div class="t" style="left:553px;top:130px;font-size:14px;line-height:14px;color:#1a1a1a;letter-spacing:0.506px;">Quelle</div>
<div class="t" style="left:634px;top:130px;font-size:14px;line-height:14px;color:#1a1a1a;transform:scaleX(0.9199);transform-origin:0 0;">Ereigni…</div>
<div class="t" style="left:700px;top:130px;font-size:14px;line-height:14px;color:#1a1a1a;transform:scaleX(0.9495);transform-origin:0 0;">Aufgab…</div>
<div style="left:241px;top:148px;width:759px;height:197px;overflow:hidden">
<div style="left:26px;top:3px;width:497px;height:22px;background:#0078d7;outline:1px dotted #1b4f8a;outline-offset:-1px;"></div>
<svg style="left:6px;top:4px" width="19" height="19" viewBox="0 0 19 19">
<defs><radialGradient id="gi0" cx="0.4" cy="0.35" r="0.7"><stop offset="0" stop-color="#a8d0f0"/><stop offset="1" stop-color="#4f8fd0"/></radialGradient></defs>
<circle cx="9.5" cy="9.5" r="8.6" fill="url(#gi0)" stroke="#3d78b8" stroke-width="1.3"/>
<rect x="8.2" y="7.3" width="2.8" height="8" fill="#2a3fa8"/>
<circle cx="9.6" cy="4.6" r="1.6" fill="#2a3fa8"/>
</svg>
<div class="t" style="left:28px;top:8px;font-size:14px;line-height:14px;color:#ffffff;letter-spacing:0.574px;">Informationen</div>
<div class="t" style="left:130px;top:8px;font-size:14px;line-height:14px;color:#ffffff;transform:scaleX(0.9010);transform-origin:0 0;">18.05.2025 19:16:37</div>
<div class="t" style="left:312px;top:8px;font-size:14px;line-height:14px;color:#ffffff;transform:scaleX(0.8510);transform-origin:0 0;">LAPS</div>
<div class="t" style="left:408px;top:8px;font-size:14px;line-height:14px;color:#ffffff;transform:scaleX(0.9242);transform-origin:0 0;">10022</div>
<div class="t" style="left:458px;top:8px;font-size:14px;line-height:14px;color:#ffffff;letter-spacing:0.122px;">Keine</div>
<svg style="left:6px;top:27px" width="19" height="19" viewBox="0 0 19 19">
<defs><radialGradient id="gi1" cx="0.4" cy="0.35" r="0.7"><stop offset="0" stop-color="#ffffff"/><stop offset="1" stop-color="#c8c8c8"/></radialGradient></defs>
<circle cx="9.5" cy="9.5" r="8.6" fill="url(#gi1)" stroke="#8a8a8a" stroke-width="1.3"/>
<rect x="8.2" y="7.3" width="2.8" height="8" fill="#2a3fa8"/>
<circle cx="9.6" cy="4.6" r="1.6" fill="#2a3fa8"/>
</svg>
<div class="t" style="left:28px;top:31px;font-size:14px;line-height:14px;color:#1a1a1a;letter-spacing:0.574px;">Informationen</div>
<div class="t" style="left:130px;top:31px;font-size:14px;line-height:14px;color:#1a1a1a;transform:scaleX(0.9010);transform-origin:0 0;">18.05.2025 19:16:37</div>
<div class="t" style="left:312px;top:31px;font-size:14px;line-height:14px;color:#1a1a1a;transform:scaleX(0.8510);transform-origin:0 0;">LAPS</div>
<div class="t" style="left:408px;top:31px;font-size:14px;line-height:14px;color:#1a1a1a;transform:scaleX(0.9242);transform-origin:0 0;">10003</div>
<div class="t" style="left:458px;top:31px;font-size:14px;line-height:14px;color:#1a1a1a;letter-spacing:0.122px;">Keine</div>
<svg style="left:6px;top:50px" width="19" height="19" viewBox="0 0 19 19">
<defs><radialGradient id="gi2" cx="0.4" cy="0.35" r="0.7"><stop offset="0" stop-color="#ffffff"/><stop offset="1" stop-color="#c8c8c8"/></radialGradient></defs>
<circle cx="9.5" cy="9.5" r="8.6" fill="url(#gi2)" stroke="#8a8a8a" stroke-width="1.3"/>
<rect x="8.2" y="7.3" width="2.8" height="8" fill="#2a3fa8"/>
<circle cx="9.6" cy="4.6" r="1.6" fill="#2a3fa8"/>
</svg>
<div class="t" style="left:28px;top:54px;font-size:14px;line-height:14px;color:#1a1a1a;letter-spacing:0.574px;">Informationen</div>
<div class="t" style="left:130px;top:54px;font-size:14px;line-height:14px;color:#1a1a1a;transform:scaleX(0.9010);transform-origin:0 0;">18.05.2025 18:16:37</div>
<div class="t" style="left:312px;top:54px;font-size:14px;line-height:14px;color:#1a1a1a;transform:scaleX(0.8510);transform-origin:0 0;">LAPS</div>
<div class="t" style="left:408px;top:54px;font-size:14px;line-height:14px;color:#1a1a1a;transform:scaleX(0.9242);transform-origin:0 0;">10004</div>
<div class="t" style="left:458px;top:54px;font-size:14px;line-height:14px;color:#1a1a1a;letter-spacing:0.122px;">Keine</div>
<svg style="left:6px;top:73px" width="19" height="19" viewBox="0 0 19 19">
<defs><radialGradient id="gi3" cx="0.4" cy="0.35" r="0.7"><stop offset="0" stop-color="#ffffff"/><stop offset="1" stop-color="#c8c8c8"/></radialGradient></defs>
<circle cx="9.5" cy="9.5" r="8.6" fill="url(#gi3)" stroke="#8a8a8a" stroke-width="1.3"/>
<rect x="8.2" y="7.3" width="2.8" height="8" fill="#2a3fa8"/>
<circle cx="9.6" cy="4.6" r="1.6" fill="#2a3fa8"/>
</svg>
<div class="t" style="left:28px;top:77px;font-size:14px;line-height:14px;color:#1a1a1a;letter-spacing:0.574px;">Informationen</div>
<div class="t" style="left:130px;top:77px;font-size:14px;line-height:14px;color:#1a1a1a;transform:scaleX(0.9010);transform-origin:0 0;">18.05.2025 18:16:37</div>
<div class="t" style="left:312px;top:77px;font-size:14px;line-height:14px;color:#1a1a1a;transform:scaleX(0.8510);transform-origin:0 0;">LAPS</div>
<div class="t" style="left:408px;top:77px;font-size:14px;line-height:14px;color:#1a1a1a;transform:scaleX(0.9242);transform-origin:0 0;">10020</div>
<div class="t" style="left:458px;top:77px;font-size:14px;line-height:14px;color:#1a1a1a;letter-spacing:0.122px;">Keine</div>
<svg style="left:6px;top:96px" width="19" height="19" viewBox="0 0 19 19">
<defs><radialGradient id="gi4" cx="0.4" cy="0.35" r="0.7"><stop offset="0" stop-color="#ffffff"/><stop offset="1" stop-color="#c8c8c8"/></radialGradient></defs>
<circle cx="9.5" cy="9.5" r="8.6" fill="url(#gi4)" stroke="#8a8a8a" stroke-width="1.3"/>
<rect x="8.2" y="7.3" width="2.8" height="8" fill="#2a3fa8"/>
<circle cx="9.6" cy="4.6" r="1.6" fill="#2a3fa8"/>
</svg>
<div class="t" style="left:28px;top:100px;font-size:14px;line-height:14px;color:#1a1a1a;letter-spacing:0.574px;">Informationen</div>
<div class="t" style="left:130px;top:100px;font-size:14px;line-height:14px;color:#1a1a1a;transform:scaleX(0.9010);transform-origin:0 0;">18.05.2025 18:16:36</div>
<div class="t" style="left:312px;top:100px;font-size:14px;line-height:14px;color:#1a1a1a;transform:scaleX(0.8510);transform-origin:0 0;">LAPS</div>
<div class="t" style="left:408px;top:100px;font-size:14px;line-height:14px;color:#1a1a1a;transform:scaleX(0.9242);transform-origin:0 0;">10029</div>
<div class="t" style="left:458px;top:100px;font-size:14px;line-height:14px;color:#1a1a1a;letter-spacing:0.122px;">Keine</div>
<svg style="left:6px;top:119px" width="19" height="19" viewBox="0 0 19 19">
<defs><radialGradient id="gi5" cx="0.4" cy="0.35" r="0.7"><stop offset="0" stop-color="#ffffff"/><stop offset="1" stop-color="#c8c8c8"/></radialGradient></defs>
<circle cx="9.5" cy="9.5" r="8.6" fill="url(#gi5)" stroke="#8a8a8a" stroke-width="1.3"/>
<rect x="8.2" y="7.3" width="2.8" height="8" fill="#2a3fa8"/>
<circle cx="9.6" cy="4.6" r="1.6" fill="#2a3fa8"/>
</svg>
<div class="t" style="left:28px;top:123px;font-size:14px;line-height:14px;color:#1a1a1a;letter-spacing:0.574px;">Informationen</div>
<div class="t" style="left:130px;top:123px;font-size:14px;line-height:14px;color:#1a1a1a;transform:scaleX(0.9010);transform-origin:0 0;">18.05.2025 18:16:36</div>
<div class="t" style="left:312px;top:123px;font-size:14px;line-height:14px;color:#1a1a1a;transform:scaleX(0.8510);transform-origin:0 0;">LAPS</div>
<div class="t" style="left:408px;top:123px;font-size:14px;line-height:14px;color:#1a1a1a;transform:scaleX(0.9242);transform-origin:0 0;">10030</div>
<div class="t" style="left:458px;top:123px;font-size:14px;line-height:14px;color:#1a1a1a;letter-spacing:0.122px;">Keine</div>
<svg style="left:6px;top:142px" width="19" height="19" viewBox="0 0 19 19">
<defs><radialGradient id="gi6" cx="0.4" cy="0.35" r="0.7"><stop offset="0" stop-color="#ffffff"/><stop offset="1" stop-color="#c8c8c8"/></radialGradient></defs>
<circle cx="9.5" cy="9.5" r="8.6" fill="url(#gi6)" stroke="#8a8a8a" stroke-width="1.3"/>
<rect x="8.2" y="7.3" width="2.8" height="8" fill="#2a3fa8"/>
<circle cx="9.6" cy="4.6" r="1.6" fill="#2a3fa8"/>
</svg>
<div class="t" style="left:28px;top:146px;font-size:14px;line-height:14px;color:#1a1a1a;letter-spacing:0.574px;">Informationen</div>
<div class="t" style="left:130px;top:146px;font-size:14px;line-height:14px;color:#1a1a1a;transform:scaleX(0.9010);transform-origin:0 0;">18.05.2025 18:16:35</div>
<div class="t" style="left:312px;top:146px;font-size:14px;line-height:14px;color:#1a1a1a;transform:scaleX(0.8510);transform-origin:0 0;">LAPS</div>
<div class="t" style="left:408px;top:146px;font-size:14px;line-height:14px;color:#1a1a1a;transform:scaleX(0.9242);transform-origin:0 0;">10015</div>
<div class="t" style="left:458px;top:146px;font-size:14px;line-height:14px;color:#1a1a1a;letter-spacing:0.122px;">Keine</div>
<svg style="left:6px;top:165px" width="19" height="19" viewBox="0 0 19 19">
<defs><radialGradient id="gi7" cx="0.4" cy="0.35" r="0.7"><stop offset="0" stop-color="#ffffff"/><stop offset="1" stop-color="#c8c8c8"/></radialGradient></defs>
<circle cx="9.5" cy="9.5" r="8.6" fill="url(#gi7)" stroke="#8a8a8a" stroke-width="1.3"/>
<rect x="8.2" y="7.3" width="2.8" height="8" fill="#2a3fa8"/>
<circle cx="9.6" cy="4.6" r="1.6" fill="#2a3fa8"/>
</svg>
<div class="t" style="left:28px;top:169px;font-size:14px;line-height:14px;color:#1a1a1a;letter-spacing:0.574px;">Informationen</div>
<div class="t" style="left:130px;top:169px;font-size:14px;line-height:14px;color:#1a1a1a;transform:scaleX(0.9010);transform-origin:0 0;">18.05.2025 18:16:35</div>
<div class="t" style="left:312px;top:169px;font-size:14px;line-height:14px;color:#1a1a1a;transform:scaleX(0.8510);transform-origin:0 0;">LAPS</div>
<div class="t" style="left:408px;top:169px;font-size:14px;line-height:14px;color:#1a1a1a;transform:scaleX(0.9242);transform-origin:0 0;">10030</div>
<div class="t" style="left:458px;top:169px;font-size:14px;line-height:14px;color:#1a1a1a;letter-spacing:0.122px;">Keine</div>
<svg style="left:6px;top:188px" width="19" height="19" viewBox="0 0 19 19">
<defs><radialGradient id="gi8" cx="0.4" cy="0.35" r="0.7"><stop offset="0" stop-color="#ffffff"/><stop offset="1" stop-color="#c8c8c8"/></radialGradient></defs>
<circle cx="9.5" cy="9.5" r="8.6" fill="url(#gi8)" stroke="#8a8a8a" stroke-width="1.3"/>
<rect x="8.2" y="7.3" width="2.8" height="8" fill="#2a3fa8"/>
<circle cx="9.6" cy="4.6" r="1.6" fill="#2a3fa8"/>
</svg>
<div class="t" style="left:28px;top:192px;font-size:14px;line-height:14px;color:#1a1a1a;letter-spacing:0.574px;">Informationen</div>
<div class="t" style="left:130px;top:192px;font-size:14px;line-height:14px;color:#1a1a1a;transform:scaleX(0.9010);transform-origin:0 0;">18.05.2025 18:16:35</div>
<div class="t" style="left:312px;top:192px;font-size:14px;line-height:14px;color:#1a1a1a;transform:scaleX(0.8510);transform-origin:0 0;">LAPS</div>
<div class="t" style="left:408px;top:192px;font-size:14px;line-height:14px;color:#1a1a1a;transform:scaleX(0.9242);transform-origin:0 0;">10052</div>
<div class="t" style="left:458px;top:192px;font-size:14px;line-height:14px;color:#1a1a1a;letter-spacing:0.122px;">Keine</div>
</div>
<div style="left:237px;top:345px;width:763px;height:1px;background:#4a4a4a;"></div>
<div style="left:237px;top:346px;width:763px;height:6px;background:#f6f6f6;"></div>
<div style="left:237px;top:352px;width:763px;height:431px;background:#7a7a7a;"></div>
<div style="left:240px;top:353px;width:760px;height:430px;background:#f0f0f0;"></div>
<div class="t" style="left:249px;top:361px;font-size:14px;line-height:14px;color:#1a1a1a;letter-spacing:-0.310px;">Ereignis 10022, LAPS</div>
<div style="left:245px;top:379px;width:755px;height:2px;background:#8e8e8e;"></div>
<div style="left:252px;top:390px;width:83px;height:27px;background:#f6f6f6;"></div>
<div class="t" style="left:261px;top:397px;font-size:14px;line-height:14px;color:#1a1a1a;letter-spacing:0.202px;">Allgemein</div>
<div class="t" style="left:341px;top:399px;font-size:14px;line-height:14px;color:#1a1a1a;letter-spacing:0.051px;">Details</div>
<div style="left:269px;top:437px;width:731px;height:340px;background:#6f6f6f;"></div>
<div style="left:272px;top:439px;width:728px;height:337px;background:#fafafa;"></div>
<div style="left:273px;top:440px;width:727px;height:336px;background:#f0f0f0;"></div>
<div style="left:269px;top:776px;width:731px;height:2px;background:#fafafa;"></div>
<div class="t" style="left:274px;top:444px;font-size:14px;line-height:14px;color:#1a1a1a;letter-spacing:0.208px;">Die aktuelle LAPS-Richtlinie ist wie folgt konfiguriert:</div>
<div class="t" style="left:277px;top:480px;font-size:14px;line-height:14px;color:#1a1a1a;letter-spacing:0.008px;">Richtlinienquelle: CSP</div>
<div class="t" style="left:277px;top:499px;font-size:14px;line-height:14px;color:#1a1a1a;letter-spacing:0.136px;">Sicherungsverzeichnis: Azure Active Directory</div>
<div class="t" style="left:277px;top:517px;font-size:14px;line-height:14px;color:#1a1a1a;letter-spacing:0.340px;">Name des lokalen Administratorkontos: WLapsAdmin-ind</div>
<div class="t" style="left:277px;top:535px;font-size:14px;line-height:14px;color:#1a1a1a;letter-spacing:0.215px;">Kennwortalter in Tagen: 30</div>
<div class="t" style="left:277px;top:553px;font-size:14px;line-height:14px;color:#1a1a1a;letter-spacing:0.318px;">Kennwortkomplexität: 4</div>
<div class="t" style="left:277px;top:571px;font-size:14px;line-height:14px;color:#1a1a1a;letter-spacing:0.190px;">Kennwortlänge: 14</div>
<div class="t" style="left:277px;top:589px;font-size:14px;line-height:14px;color:#1a1a1a;letter-spacing:0.156px;">Karenzzeit nach Authentifizierung (Stunden): 24</div>
<div class="t" style="left:277px;top:608px;font-size:14px;line-height:14px;color:#1a1a1a;letter-spacing:0.266px;">Aktionen nach der Authentifizierung: 0x1</div>
<div class="t" style="left:277px;top:626px;font-size:14px;line-height:14px;color:#1a1a1a;letter-spacing:0.269px;">Aktivierte automatische Kontoverwaltung: 1</div>
<div class="t" style="left:277px;top:644px;font-size:14px;line-height:14px;color:#1a1a1a;letter-spacing:0.413px;">Automatische Kontoverwaltung: Ziel: CustomAdminAccount</div>
<div class="t" style="left:277px;top:662px;font-size:14px;line-height:14px;color:#1a1a1a;letter-spacing:0.301px;">Automatische Kontoverwaltung: Name oder Namenspräfix:  WLapsAdmin-ind</div>
<div class="t" style="left:277px;top:681px;font-size:14px;line-height:14px;color:#1a1a1a;letter-spacing:0.314px;">Automatische Kontoverwaltung: Konto aktiviert: 0</div>
<div class="t" style="left:277px;top:699px;font-size:14px;line-height:14px;color:#1a1a1a;letter-spacing:0.284px;">Automatische Kontoverwaltung: Zufälliger Name: 1</div>
<div class="t" style="left:277px;top:736px;font-size:14px;line-height:14px;color:#1a1a1a;letter-spacing:0.256px;">Weitere Informationen finden Sie im</div>
<div class="t" style="left:513px;top:736px;font-size:14px;line-height:14px;color:#1a6ac6;letter-spacing:0.516px;text-decoration:underline;text-decoration-skip-ink:none;">https://go.microsoft.com/fwlink/?linkid=2220550</div>
<div class="t" style="left:829px;top:736px;font-size:14px;line-height:14px;color:#1a1a1a;">.</div>
</body></html>
